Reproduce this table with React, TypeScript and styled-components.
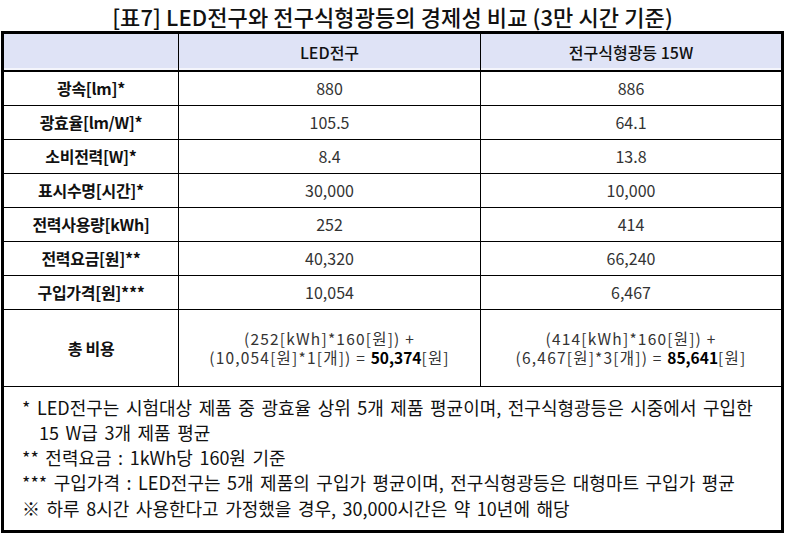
import { FC } from "react";
import styled, { createGlobalStyle } from "styled-components";

const GlobalStyle = createGlobalStyle`
  html, body {
    margin: 0;
    padding: 0;
    background: #fff;
  }
  body {
    font-family: "Noto Sans CJK KR", "Noto Sans", sans-serif;
    color: #000;
  }
`;

const Page = styled.div`
  width: 785px;
  padding: 0 1px;
  box-sizing: border-box;
`;

const TitleBar = styled.div`
  height: 31px;
  display: flex;
  justify-content: center;
  align-items: center;
  overflow: hidden;
`;

const Title = styled.h1`
  margin: 0;
  font-size: 22px;
  font-weight: 500;
  letter-spacing: 0.1px;
  white-space: nowrap;
  color: #111;
`;

const Table = styled.table`
  width: 783px;
  border-collapse: collapse;
  border: 3px solid #000;
  table-layout: fixed;
`;

const HeadCell = styled.th`
  height: 36px;
  background: #dfe3f6;
  border: 1px solid #000;
  border-bottom: 2px solid #000;
  box-shadow: inset 0 -4px 0 -2px #f4f5fc;
  font-size: 16px;
  font-weight: 500;
  color: #111;
  padding: 0;
`;

const Row = styled.tr<{ $tall?: boolean }>`
  height: ${(p) => (p.$tall ? "77px" : "34px")};
`;

const Label = styled.td`
  border: 1px solid #000;
  text-align: center;
  font-size: 16px;
  font-weight: 700;
  color: #111;
  padding: 0;
  letter-spacing: -0.3px;
`;

const Value = styled.td`
  border: 1px solid #000;
  text-align: center;
  font-size: 16px;
  font-weight: 400;
  color: #333;
  padding: 0;
`;

const FormulaLine = styled.div`
  font-size: 15.5px;
  line-height: 19px;
  letter-spacing: 1.2px;
  white-space: nowrap;
`;

const Strong = styled.b`
  color: #000;
  font-weight: 700;
  letter-spacing: 0;
`;

const NotesCell = styled.td`
  border: 1px solid #000;
  padding: 8px 0 0 18px;
  vertical-align: top;
  height: 145px;
  box-sizing: border-box;
`;

const Note = styled.div<{ $indent?: boolean }>`
  font-size: 18px;
  line-height: 25.3px;
  color: #111;
  white-space: nowrap;
  padding-left: ${(p) => (p.$indent ? "17px" : "0")};
  word-spacing: 2.5px;
`;

interface IRow {
  label: string;
  led: string;
  cfl: string;
}

const rows: IRow[] = [
  { label: "광속[lm]*", led: "880", cfl: "886" },
  { label: "광효율[lm/W]*", led: "105.5", cfl: "64.1" },
  { label: "소비전력[W]*", led: "8.4", cfl: "13.8" },
  { label: "표시수명[시간]*", led: "30,000", cfl: "10,000" },
  { label: "전력사용량[kWh]", led: "252", cfl: "414" },
  { label: "전력요금[원]**", led: "40,320", cfl: "66,240" },
  { label: "구입가격[원]***", led: "10,054", cfl: "6,467" },
];

const App: FC = () => {
  return (
    <Page>
      <GlobalStyle />
      <TitleBar>
        <Title>[표7] LED전구와 전구식형광등의 경제성 비교 (3만 시간 기준)</Title>
      </TitleBar>
      <Table>
        <colgroup>
          <col style={{ width: 176 }} />
          <col style={{ width: 302 }} />
          <col style={{ width: 302 }} />
        </colgroup>
        <thead>
          <tr>
            <HeadCell />
            <HeadCell>LED전구</HeadCell>
            <HeadCell>전구식형광등 15W</HeadCell>
          </tr>
        </thead>
        <tbody>
          {rows.map((r) => (
            <Row key={r.label}>
              <Label>{r.label}</Label>
              <Value>{r.led}</Value>
              <Value>{r.cfl}</Value>
            </Row>
          ))}
          <Row $tall>
            <Label>총 비용</Label>
            <Value>
              <FormulaLine>(252[kWh]*160[원]) +</FormulaLine>
              <FormulaLine>
                (10,054[원]*1[개]) = <Strong>50,374</Strong>[원]
              </FormulaLine>
            </Value>
            <Value>
              <FormulaLine>(414[kWh]*160[원]) +</FormulaLine>
              <FormulaLine>
                (6,467[원]*3[개]) = <Strong>85,641</Strong>[원]
              </FormulaLine>
            </Value>
          </Row>
          <tr>
            <NotesCell colSpan={3}>
              <Note>
                * LED전구는 시험대상 제품 중 광효율 상위 5개 제품 평균이며, 전구식형광등은 시중에서 구입한
              </Note>
              <Note $indent>15 W급 3개 제품 평균</Note>
              <Note>** 전력요금 : 1kWh당 160원 기준</Note>
              <Note>*** 구입가격 : LED전구는 5개 제품의 구입가 평균이며, 전구식형광등은 대형마트 구입가 평균</Note>
              <Note>※ 하루 8시간 사용한다고 가정했을 경우, 30,000시간은 약 10년에 해당</Note>
            </NotesCell>
          </tr>
        </tbody>
      </Table>
    </Page>
  );
};

export default App;
